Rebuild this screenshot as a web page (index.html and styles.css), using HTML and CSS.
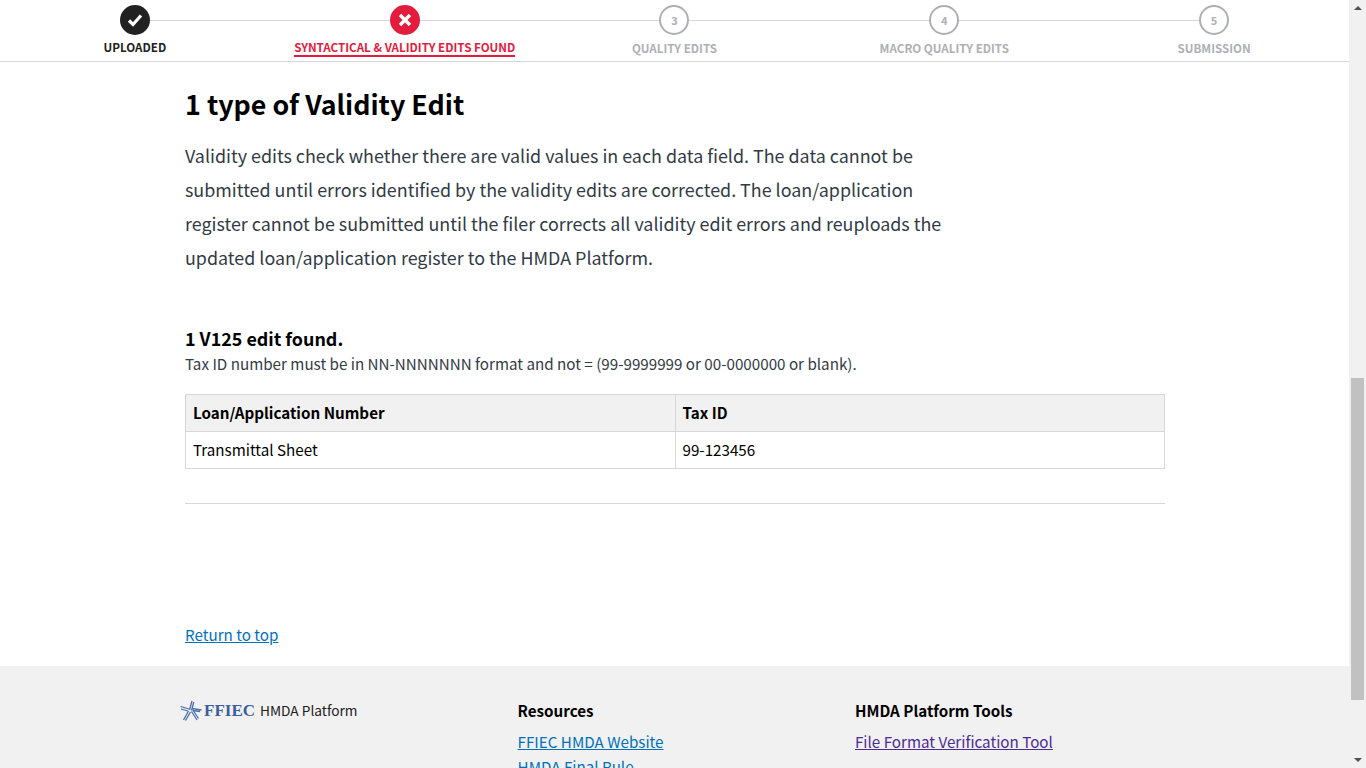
FILE: index.html
```html
<!DOCTYPE html>
<html lang="en">
<head>
    <meta charset="UTF-8">
    <title>HMDA Platform - Edits</title>
    <link rel="stylesheet" href="styles.css">
</head>
<body>
    <div class="page">
        <nav class="progress">
            <div class="step step-done">
                <span class="step-circle">
                    <svg width="16" height="14" viewBox="0 0 16 14"><path d="M2 7.5 L6 11.5 L14 2.5" fill="none" stroke="#fff" stroke-width="3.2"/></svg>
                </span>
                <span class="step-label">UPLOADED</span>
            </div>
            <div class="step step-error">
                <span class="step-circle">
                    <svg width="14" height="14" viewBox="0 0 14 14"><path d="M2 2 L12 12 M12 2 L2 12" fill="none" stroke="#fff" stroke-width="3.4"/></svg>
                </span>
                <span class="step-label">SYNTACTICAL &amp; VALIDITY EDITS FOUND</span>
            </div>
            <div class="step">
                <span class="step-circle">3</span>
                <span class="step-label">QUALITY EDITS</span>
            </div>
            <div class="step">
                <span class="step-circle">4</span>
                <span class="step-label">MACRO QUALITY EDITS</span>
            </div>
            <div class="step">
                <span class="step-circle">5</span>
                <span class="step-label">SUBMISSION</span>
            </div>
        </nav>

        <main class="content">
            <h2>1 type of Validity Edit</h2>
            <p class="intro">Validity edits check whether there are valid values in each data field. The data cannot be submitted until errors identified by the validity edits are corrected. The loan/application register cannot be submitted until the filer corrects all validity edit errors and reuploads the updated loan/application register to the HMDA Platform.</p>

            <h4>1 V125 edit found.</h4>
            <p class="edit-desc">Tax ID number must be in NN-NNNNNNN format and not = (99-9999999 or 00-0000000 or blank).</p>

            <table class="edit-table">
                <thead>
                    <tr>
                        <th>Loan/Application Number</th>
                        <th>Tax ID</th>
                    </tr>
                </thead>
                <tbody>
                    <tr>
                        <td>Transmittal Sheet</td>
                        <td>99-123456</td>
                    </tr>
                </tbody>
            </table>

            <hr class="divider">

            <a class="top-link" href="#">Return to top</a>
        </main>

        <footer class="footer">
            <div class="footer-inner">
                <div class="footer-logo">
                    <svg class="star" width="22" height="21" viewBox="0 0 22 21">
                        <g fill="none" stroke="#4a6ea9" stroke-width="1.3">
                            <path d="M9.5 10 L12 1 M11.5 10.5 L13.8 2"/>
                            <path d="M9 9 L0.5 6.5 M8 11 L1 9"/>
                            <path d="M12 8.5 L21.5 10 M12.5 10.5 L20 11.5"/>
                            <path d="M8.5 11 L3.5 20 M10.5 12 L5.5 20.5"/>
                            <path d="M11.5 11.5 L17 20 M13.5 11 L18.5 18.5"/>
                        </g>
                    </svg>
                    <span class="ffiec">FFIEC</span>
                    <span class="platform">HMDA Platform</span>
                </div>
                <div class="footer-col">
                    <h5>Resources</h5>
                    <a href="#">FFIEC HMDA Website</a>
                    <a href="#">HMDA Final Rule</a>
                </div>
                <div class="footer-col">
                    <h5>HMDA Platform Tools</h5>
                    <a class="visited" href="#">File Format Verification Tool</a>
                </div>
            </div>
        </footer>
    </div>

    <div class="scrollbar">
        <span class="arrow arrow-up"></span>
        <div class="track"><div class="thumb"></div></div>
        <span class="arrow arrow-down"></span>
    </div>
</body>
</html>
```

FILE: styles.css
```css
html, body {
    margin: 0;
    height: 100%;
    overflow: hidden;
}

body {
    display: flex;
    background: #fff;
    color: #212121;
    font-family: "Noto Sans CJK SC", "Open Sans", sans-serif;
}

.page {
    flex: 1;
    min-width: 0;
    display: flex;
    flex-direction: column;
    height: 768px;
    overflow: hidden;
}

/* progress steps */
.progress {
    display: grid;
    grid-template-columns: repeat(5, 1fr);
    height: 61px;
    flex: none;
    border-bottom: 1px solid #d6d7d9;
}

.step {
    position: relative;
    display: flex;
    flex-direction: column;
    align-items: center;
    padding-top: 5px;
}

.step::before {
    content: "";
    position: absolute;
    top: 20px;
    left: 0;
    right: 0;
    height: 1px;
    background: #d6d7d9;
}

.step:first-child::before {
    left: 50%;
}

.step:last-child::before {
    right: 50%;
}

.step-circle {
    position: relative;
    box-sizing: border-box;
    width: 30px;
    height: 30px;
    border: 2px solid #aeb0b5;
    border-radius: 50%;
    background: #fff;
    color: #aeb0b5;
    font-size: 11px;
    font-weight: 700;
    line-height: 26px;
    text-align: center;
}

.step-done .step-circle,
.step-error .step-circle {
    display: flex;
    align-items: center;
    justify-content: center;
    border: none;
}

.step-done .step-circle {
    background: #212121;
}

.step-error .step-circle {
    background: #e31c3d;
}

.step-label {
    margin-top: 6px;
    color: #aeb0b5;
    font-size: 11.6px;
    font-weight: 700;
    line-height: 14px;
    white-space: nowrap;
}

.step-done .step-label {
    margin-top: 5px;
    color: #212121;
}

.step-error .step-label {
    margin-top: 5px;
    padding-bottom: 1px;
    color: #e31c3d;
    border-bottom: 2px solid #e31c3d;
}

/* main column */
.content {
    flex: none;
    box-sizing: border-box;
    width: 980px;
    height: 604px;
    margin-left: 185px;
    padding-top: 23px;
}

h2 {
    margin: 0 0 15px;
    color: #000;
    font-size: 26.8px;
    font-weight: 700;
    line-height: 38px;
}

.intro {
    width: 760px;
    margin: 0 0 52px;
    color: #323a45;
    font-size: 17.9px;
    line-height: 34px;
}

h4 {
    margin: 0;
    color: #000;
    font-size: 17.9px;
    font-weight: 700;
    line-height: 24px;
}

.edit-desc {
    margin: 0 0 18px;
    color: #323a45;
    font-size: 15.2px;
    line-height: 26px;
}

.edit-table {
    width: 100%;
    border-collapse: collapse;
    font-size: 15.2px;
    line-height: 20px;
    table-layout: fixed;
}

.edit-table th,
.edit-table td {
    height: 37px;
    box-sizing: border-box;
    padding: 0 7px 2px;
    border: 1px solid #d6d7d9;
    color: #000;
    text-align: left;
}

.edit-table th {
    background: #f1f1f1;
    font-weight: 700;
}

.divider {
    height: 1px;
    margin: 34px 0 118px;
    border: 0;
    background: #d6d7d9;
}

.top-link,
.footer a {
    color: #0071bc;
    font-size: 15.2px;
}

.top-link {
    line-height: 22px;
}

/* footer */
.footer {
    flex: 1;
    background: #f1f1f1;
}

.footer-inner {
    display: flex;
    padding: 33px 0 0 180px;
}

.footer-logo {
    display: flex;
    align-items: center;
    width: 337.6px;
    height: 22px;
    box-sizing: border-box;
}

.ffiec {
    margin-top: 1px;
    margin-left: 2px;
    color: #3b5f9a;
    font-family: "Liberation Serif", serif;
    font-size: 17px;
    font-weight: 700;
}

.platform {
    margin-left: 5px;
    color: #212121;
    font-size: 13.7px;
}

.footer-col {
    width: 337.4px;
}

.footer-col h5 {
    margin: 0 0 9px;
    color: #000;
    font-size: 15.2px;
    font-weight: 700;
    line-height: 22px;
}

.footer-col a {
    display: block;
    margin-bottom: 3px;
    line-height: 22px;
}

.footer-col a.visited {
    color: #4c2c92;
}

/* window scrollbar */
.scrollbar {
    flex: none;
    width: 17px;
    height: 768px;
    display: flex;
    flex-direction: column;
    align-items: center;
    background: #f1f1f1;
}

.arrow {
    flex: none;
    width: 0;
    height: 0;
    border-left: 4px solid transparent;
    border-right: 4px solid transparent;
}

.arrow-up {
    margin: 6px 0 5px;
    border-bottom: 4px solid #505050;
}

.arrow-down {
    margin: 5px 0 6px;
    border-top: 4px solid #505050;
}

.track {
    flex: 1;
    width: 100%;
    padding-top: 363px;
    box-sizing: border-box;
}

.thumb {
    width: 13px;
    height: 322px;
    margin-left: 2px;
    background: #c1c1c1;
}
```
